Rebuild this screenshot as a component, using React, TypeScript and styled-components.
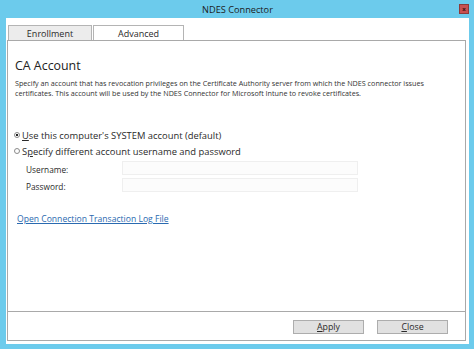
import { FC } from 'react';
import styled, { createGlobalStyle } from 'styled-components';

const GlobalStyle = createGlobalStyle`
  html, body {
    margin: 0;
    padding: 0;
    background: #ffffff;
  }
  body {
    font-family: 'Open Sans', 'Noto Sans', 'Liberation Sans', sans-serif;
    color: #333333;
  }
`;

const Window = styled.div`
  width: 474px;
  height: 349px;
  box-sizing: border-box;
  background: #6ccbec;
  padding: 0 5px 5px 6px;
  display: flex;
  flex-direction: column;
`;

const TitleBar = styled.div`
  height: 18px;
  position: relative;
  display: flex;
  align-items: center;
  justify-content: center;
  font-size: 9.2px;
  color: #1c1c1c;
`;

const CloseBox = styled.div`
  position: absolute;
  right: 0px;
  top: 4px;
  width: 10px;
  height: 10px;
  box-sizing: border-box;
  background: #c75050;
  border: 1px solid #8c3a3a;
  display: flex;
  align-items: center;
  justify-content: center;
  font-size: 6px;
  line-height: 1;
  color: #3a0f0f;
  font-weight: bold;
`;

const Client = styled.div`
  flex: 1;
  background: #ffffff;
  padding: 7px 3px 3px 1px;
  display: flex;
  flex-direction: column;
`;

const TabStrip = styled.div`
  display: flex;
  height: 15px;
  padding-left: 1px;
  gap: 1px;
`;

const Tab = styled.div<{ $active?: boolean }>`
  box-sizing: border-box;
  width: ${(p) => (p.$active ? 91 : 84)}px;
  height: 15px;
  border: 1px solid #b4b4b4;
  border-bottom: none;
  background: ${(p) => (p.$active ? '#ffffff' : '#ececec')};
  font-size: 9px;
  color: #2a2a2a;
  display: flex;
  align-items: center;
  justify-content: center;
`;

const Frame = styled.div`
  flex: 1;
  border: 1px solid #a9a9a9;
  display: flex;
  flex-direction: column;
`;

const Panel = styled.div`
  height: 271px;
  border-bottom: 1px solid #a9a9a9;
  padding: 17px 8px 0 7px;
  box-sizing: border-box;
`;

const Heading = styled.div`
  font-size: 12.4px;
  color: #222222;
  line-height: 16px;
  margin-bottom: 5px;
`;

const Description = styled.div`
  font-size: 7.2px;
  line-height: 9.5px;
  color: #333333;
  margin-bottom: 29px;
`;

const RadioRow = styled.div`
  display: flex;
  align-items: center;
  gap: 2px;
  height: 16px;
  font-size: 9.4px;
  color: #2a2a2a;
`;

const RadioDot = styled.span<{ $checked?: boolean }>`
  width: 4px;
  height: 4px;
  margin-left: -1px;
  border-radius: 50%;
  border: 1px solid #8a8a8a;
  background: ${(p) => (p.$checked ? 'radial-gradient(circle, #222 0 1.2px, #fff 1.5px)' : '#ffffff')};
`;

const FieldGrid = styled.div`
  display: grid;
  grid-template-columns: 96px 236px;
  grid-auto-rows: 14px;
  row-gap: 3px;
  padding-left: 11px;
  margin-top: 2px;
  margin-bottom: 21px;
`;

const FieldLabel = styled.div`
  font-size: 8.3px;
  color: #2a2a2a;
  display: flex;
  align-items: center;
  padding-top: 2px;
`;

const FieldInput = styled.div`
  box-sizing: border-box;
  border: 1px solid #efefef;
  background: #fcfcfc;
`;

const Link = styled.a`
  display: block;
  line-height: 12px;
  font-size: 8.6px;
  color: #2a6ab0;
  text-decoration: underline;
  padding-left: 2px;
  cursor: pointer;
`;

const Footer = styled.div`
  flex: 1;
  display: flex;
  justify-content: flex-end;
  align-items: center;
  gap: 13px;
  padding-right: 17px;
`;

const Button = styled.div`
  width: 71px;
  height: 14px;
  box-sizing: border-box;
  background: #e1e1e1;
  border: 1px solid #adadad;
  font-size: 8.8px;
  color: #2a2a2a;
  display: flex;
  align-items: center;
  justify-content: center;
  margin-top: 1px;
  u {
    text-decoration: underline;
  }
`;

const App: FC = () => {
  return (
    <>
      <GlobalStyle />
      <Window>
        <TitleBar>
          NDES Connector
          <CloseBox>x</CloseBox>
        </TitleBar>
        <Client>
          <TabStrip>
            <Tab>Enrollment</Tab>
            <Tab $active>Advanced</Tab>
          </TabStrip>
          <Frame>
            <Panel>
              <Heading>CA Account</Heading>
              <Description>
                Specify an account that has revocation privileges on the Certificate Authority server from which the NDES connector issues
                <br />
                certificates. This account will be used by the NDES Connector for Microsoft Intune to revoke certificates.
              </Description>
              <RadioRow>
                <RadioDot $checked />
                <span>
                  <u>U</u>se this computer's SYSTEM account (default)
                </span>
              </RadioRow>
              <RadioRow>
                <RadioDot />
                <span>
                  S<u>p</u>ecify different account username and password
                </span>
              </RadioRow>
              <FieldGrid>
                <FieldLabel>Username:</FieldLabel>
                <FieldInput />
                <FieldLabel>Password:</FieldLabel>
                <FieldInput />
              </FieldGrid>
              <Link>Open Connection Transaction Log File</Link>
            </Panel>
            <Footer>
              <Button>
                <span>
                  <u>A</u>pply
                </span>
              </Button>
              <Button>
                <span>
                  <u>C</u>lose
                </span>
              </Button>
            </Footer>
          </Frame>
        </Client>
      </Window>
    </>
  );
};

export default App;
